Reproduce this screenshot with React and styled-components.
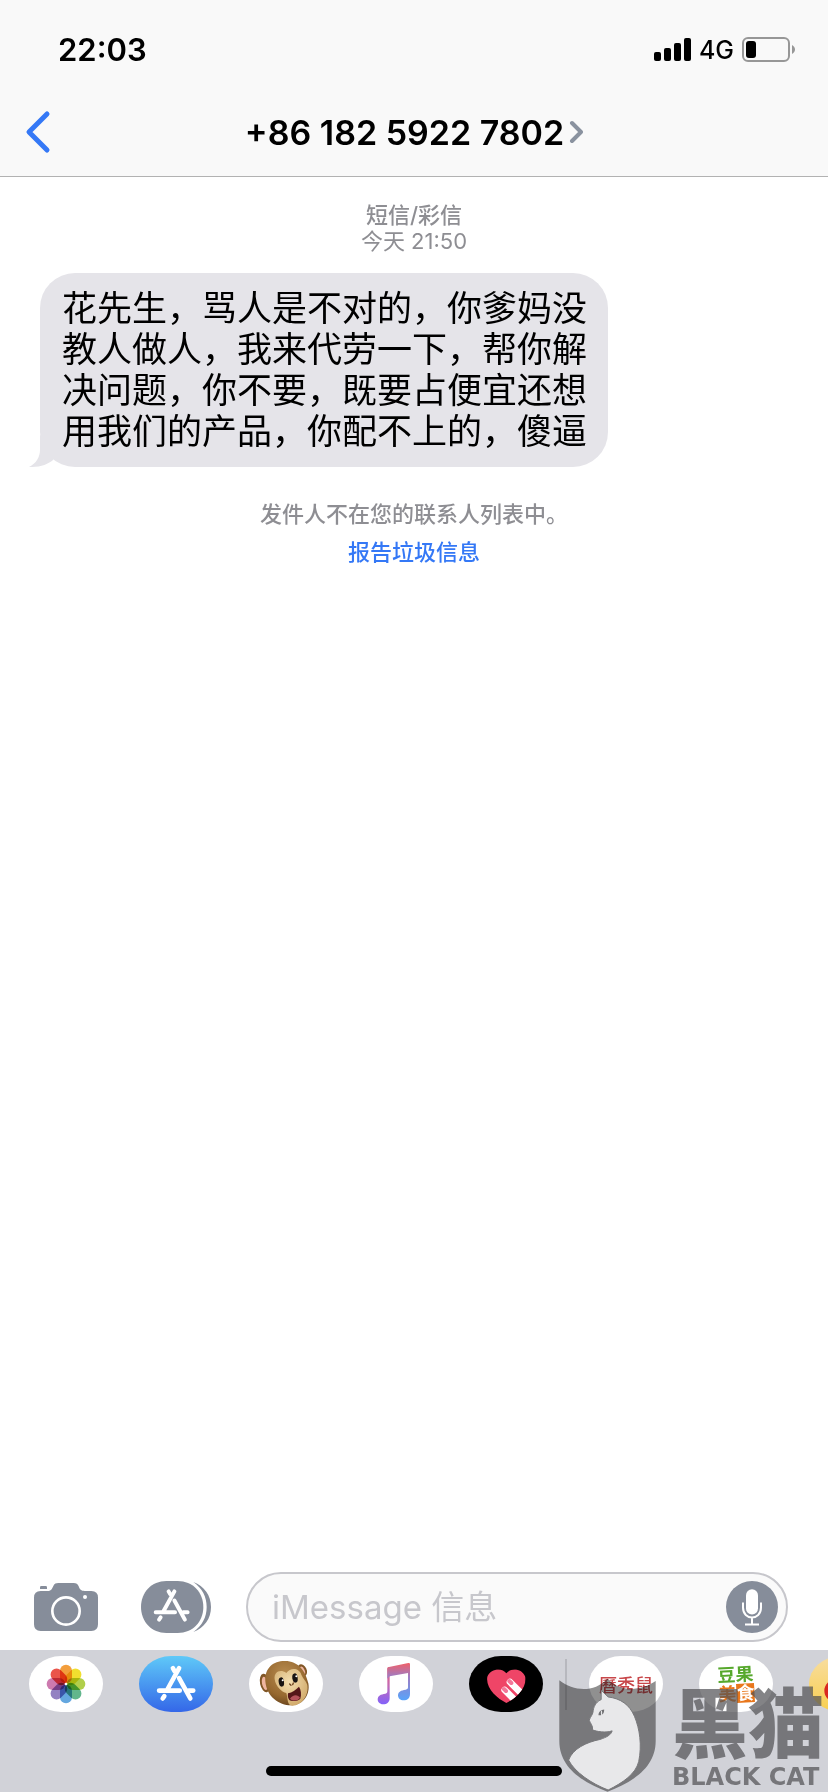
import React from 'react';
import styled, { createGlobalStyle } from 'styled-components';

const sans = `Inter, "Noto Sans CJK SC", sans-serif`;

const GlobalStyle = createGlobalStyle`
  * { box-sizing: border-box; }
  body { margin: 0; background: #fff; font-family: ${sans}; color: #000; }
  button, input { font: inherit; }
  svg { display: block; }
`;

const Screen = styled.div`
  display: flex;
  flex-direction: column;
  min-height: 100vh;
  overflow: hidden;
`;

const Header = styled.header`
  background: #f9f9f9;
  border-bottom: 1px solid #b2b2b2;
`;

const StatusBar = styled.div`
  display: flex;
  align-items: center;
  justify-content: space-between;
  height: 88px;
  padding: 11px 33px 0 58px;
`;

const Clock = styled.time`
  font-size: 31px;
  font-weight: 600;
`;

const StatusIcons = styled.div`
  display: flex;
  align-items: center;
  gap: 8px;
  font-size: 25px;
  font-weight: 500;
`;

const NavBar = styled.div`
  display: grid;
  grid-template-columns: 80px 1fr 80px;
  align-items: center;
  height: 88px;
`;

const PlainButton = styled.button`
  display: flex;
  align-items: center;
  border: 0;
  padding: 0;
  background: none;
  color: inherit;
  cursor: pointer;
  flex: none;
`;

const BackButton = styled(PlainButton)`
  padding-left: 25px;
`;

const ContactButton = styled(PlainButton)`
  justify-self: center;
  gap: 5px;
  font-size: 34px;
  font-weight: 600;
  white-space: nowrap;
`;

const Conversation = styled.main`
  display: flex;
  flex: 1;
  flex-direction: column;
  padding: 25px 40px;
`;

const Stamp = styled.div`
  color: #8e8e93;
  font-size: 22px;
  line-height: 26px;
  text-align: center;
`;

const StampLabel = styled.div`
  font-weight: 500;
`;

const Bubble = styled.div`
  position: relative;
  align-self: flex-start;
  margin: 19px 0 28px;
  padding: 15px 21px 15px 22px;
  border-radius: 35px;
  background: #e5e4e9;
`;

const BubbleText = styled.p`
  max-width: 15em;
  margin: 0;
  font-size: 35px;
  line-height: 41px;
  font-weight: 400;
`;

const Tail = styled.svg`
  position: absolute;
  left: -11px;
  bottom: 0;
`;

const Notice = styled.p`
  margin: 0;
  color: #8e8e93;
  font-size: 22px;
  font-weight: 500;
  line-height: 38px;
  text-align: center;
`;

const ReportLink = styled.a`
  align-self: center;
  color: #3478f6;
  font-size: 22px;
  font-weight: 500;
  line-height: 38px;
  text-decoration: none;
`;

const Composer = styled.form`
  display: flex;
  align-items: center;
  padding: 0 40px 8px 34px;
`;

const StoreButton = styled(PlainButton)`
  margin: 0 35px 0 43px;
`;

const Field = styled.div`
  display: flex;
  flex: 1;
  align-items: center;
  min-width: 0;
  height: 70px;
  padding: 0 8px 0 24px;
  border: 2px solid #c7c7cc;
  border-radius: 35px;
  background: #fafafa;
`;

const MessageInput = styled.input`
  flex: 1;
  min-width: 0;
  border: 0;
  padding: 0;
  outline: 0;
  background: transparent;
  font-size: 33px;
  line-height: 48px;
  &::placeholder { color: #c7c7cc; opacity: 1; }
`;

const MicButton = styled(PlainButton)`
  justify-content: center;
  width: 52px;
  height: 52px;
  border-radius: 50%;
  background: #868d9a;
`;

const AppDrawer = styled.footer`
  position: relative;
  display: flex;
  flex-direction: column;
  align-items: center;
  justify-content: space-between;
  height: 142px;
  padding: 6px 0 16px;
  overflow: hidden;
  background: #d1d2d8;
`;

const AppList = styled.div`
  display: flex;
  align-self: stretch;
  align-items: center;
  gap: 36px;
  padding-left: 29px;
`;

const AppButton = styled(PlainButton)`
  justify-content: center;
  width: 74px;
  height: 56px;
  overflow: hidden;
  border-radius: 32px / 28px;
  background: ${(p) => p.$fill || '#fff'};
`;

const Divider = styled.span`
  flex: none;
  width: 2px;
  height: 51px;
  margin: 0 -14px;
  background: #b7b8be;
`;

const SealText = styled.span`
  color: #c8474a;
  font-family: "Noto Sans CJK TC", sans-serif;
  font-size: 18px;
  font-weight: 500;
`;

const FoodLogo = styled.span`
  display: grid;
  color: #56a82c;
  font-size: 18px;
  font-weight: 700;
  line-height: 19px;
  transform: rotate(-3deg);
`;

const FoodLine = styled.span`
  color: #e8771c;
`;

const FoodBox = styled.span`
  display: inline-block;
  background: #e8771c;
  color: #fff;
`;

const HomeIndicator = styled.div`
  width: 296px;
  height: 10px;
  border-radius: 5px;
  background: #000;
`;

const Watermark = styled.div`
  position: absolute;
  right: 0;
  bottom: 0;
  display: flex;
  gap: 16px;
  align-items: flex-end;
  width: 269px;
  color: #505053;
  pointer-events: none;
`;

const BrandText = styled.div`
  display: flex;
  flex: none;
  flex-direction: column;
  opacity: 0.7;
  white-space: nowrap;
`;

const BrandName = styled.span`
  font-family: "Noto Sans CJK SC", sans-serif;
  font-size: 76px;
  font-weight: 900;
  line-height: 86px;
`;

const BrandLatin = styled.span`
  font-family: "DejaVu Sans", sans-serif;
  font-size: 24px;
  font-weight: 700;
  line-height: 30px;
`;

const StoreMark = ({ transform, width = 14 }) => (
  <g transform={transform} stroke="#fff" strokeWidth={width} strokeLinecap="round" fill="none">
    <path d="M122 36 85 103M61 104H124M103 36 108 45M122 66 156 128M151 104H165M77 121 72 128" />
  </g>
);

const Signal = () => (
  <svg width="37" height="24" aria-hidden="true">
    <rect x="0" y="14" width="7" height="9" rx="2" />
    <rect x="10" y="10" width="7" height="13" rx="2" />
    <rect x="20" y="5" width="7" height="18" rx="2" />
    <rect x="30" y="0" width="7" height="23" rx="2" />
  </svg>
);

const Battery = () => (
  <svg width="53" height="25" aria-hidden="true">
    <rect x="1" y="1" width="46" height="23" rx="5" fill="none" stroke="#979797" strokeWidth="2" />
    <rect x="4" y="4" width="10" height="17" rx="3" />
    <path d="M50 8v9c4-2 4-7 0-9z" fill="#979797" />
  </svg>
);

const Camera = () => (
  <svg width="64" height="48" viewBox="0 0 192 144" fill="#868d9a" aria-hidden="true">
    <path d="M20 24H40C51 24 54 18 58 9 61 2 66 0 73 0H119C127 0 131 3 134 10 138 20 141 24 152 24H172Q192 24 192 44V124Q192 144 172 144H20Q0 144 0 124V44Q0 24 20 24Z" />
    <path d="M18 18V13Q18 9 22 9H35Q39 9 39 13V18Z" />
    <circle cx="96" cy="84" r="41" fill="none" stroke="#fff" strokeWidth="8" />
    <circle cx="153" cy="42" r="6" fill="#fff" />
  </svg>
);

const StoreStack = () => (
  <svg width="70" height="52" viewBox="0 0 210 156" fill="#868d9a" aria-hidden="true">
    <path d="M76 0H110C155 0 187 34 187 78 187 122 155 156 110 156H76C32 156 0 122 0 78 0 34 32 0 76 0Z" />
    <path d="M157 3C190 16 210 43 210 78 210 113 190 140 157 153 184 134 197 108 197 78 197 48 184 22 157 3Z" />
    <StoreMark transform="translate(-12 -2) scale(.92)" width={13} />
  </svg>
);

const Microphone = () => (
  <svg width="20" height="37" viewBox="0 0 60 110" aria-hidden="true">
    <rect x="12" y="0" width="36" height="76" rx="18" fill="#fff" />
    <path d="M3 40V55C3 95 57 95 57 55V40M30 86V106M9 106H51" fill="none" stroke="#fff" strokeWidth="6" />
  </svg>
);

const petals = ['#f2962b', '#f0dc1d', '#aacb3c', '#55b082', '#579fdc', '#8a76bd', '#c96fa8', '#e8463c'];

const PhotosIcon = () => (
  <svg width="40" height="40" viewBox="-60 -60 120 120" aria-hidden="true">
    {petals.map((color, i) => (
      <rect
        key={color}
        x="-18"
        y="-58"
        width="36"
        height="56"
        rx="18"
        fill={color}
        fillOpacity="0.92"
        transform={`rotate(${i * 45})`}
        style={{ mixBlendMode: 'multiply' }}
      />
    ))}
    <circle r="4" fill="#fff" />
  </svg>
);

const StoreIcon = () => (
  <svg width="75" height="56" viewBox="0 0 225 168" aria-hidden="true">
    <StoreMark />
  </svg>
);

const MonkeyIcon = () => (
  <svg width="74" height="56" viewBox="0 0 222 168" aria-hidden="true">
    <defs>
      <radialGradient id="fur" cx=".45" cy=".3" r=".75">
        <stop offset="0" stopColor="#b88c50" />
        <stop offset=".65" stopColor="#96682f" />
        <stop offset="1" stopColor="#65421c" />
      </radialGradient>
      <radialGradient id="skin" cx=".45" cy=".35" r=".7">
        <stop offset="0" stopColor="#f3deb0" />
        <stop offset="1" stopColor="#cfa766" />
      </radialGradient>
    </defs>
    <ellipse cx="48" cy="81" rx="15" ry="28" fill="#815626" transform="rotate(-12 48 81)" />
    <ellipse cx="48" cy="82" rx="9" ry="20" fill="#efb5a0" transform="rotate(-12 48 82)" />
    <ellipse cx="160" cy="43" rx="13" ry="19" fill="#815626" transform="rotate(-25 160 43)" />
    <ellipse cx="160" cy="44" rx="7" ry="13" fill="#efb5a0" transform="rotate(-25 160 44)" />
    <path d="M49 76C46 34 76 14 108 15 148 15 169 44 178 82 184 116 163 146 130 148 93 150 53 124 49 76Z" fill="url(#fur)" />
    <path d="M77 70C74 47 94 38 112 51 125 33 151 36 157 56 163 70 172 75 175 87 180 117 159 149 130 149 114 149 117 128 112 111 98 109 79 90 77 70Z" fill="url(#skin)" />
    <ellipse cx="97" cy="78" rx="8" ry="14" fill="#171312" transform="rotate(-8 97 78)" />
    <ellipse cx="138" cy="66" rx="8" ry="14" fill="#171312" transform="rotate(-8 138 66)" />
    <circle cx="101" cy="73" r="3" fill="#fff" />
    <circle cx="142" cy="61" r="3" fill="#fff" />
    <path d="M122 84 126 88M133 81 131 86" stroke="#6d431f" strokeWidth="4" strokeLinecap="round" />
    <path d="M117 112C130 110 140 101 150 92 156 101 158 115 154 128 148 136 128 137 121 132 116 126 116 119 117 112Z" fill="#541719" />
    <path d="M123 128C130 115 147 114 153 125 147 135 130 137 123 128Z" fill="#b3525a" />
  </svg>
);

const MusicIcon = () => (
  <svg width="74" height="56" viewBox="0 0 222 168" aria-hidden="true">
    <defs>
      <linearGradient id="noteLeft" x1="0" y1="0" x2="0" y2="1">
        <stop offset="0" stopColor="#ef5e70" />
        <stop offset=".5" stopColor="#c26ab5" />
        <stop offset="1" stopColor="#8362fa" />
      </linearGradient>
      <linearGradient id="noteRight" x1="0" y1="0" x2="0" y2="1">
        <stop offset="0" stopColor="#f16068" />
        <stop offset=".35" stopColor="#a17ac0" />
        <stop offset="1" stopColor="#57a4fb" />
      </linearGradient>
    </defs>
    <path d="M85 38Q85 34 90 33L92 60V126C92 138 84 145 72 145 62 145 56 138 56 130 56 119 65 115 79 113 84 112 85 110 85 105Z" fill="url(#noteLeft)" />
    <path d="M85 38Q85 34 90 33L148 21Q153 20 153 25V114C153 127 145 133 134 133 124 133 117 127 117 118 117 107 126 103 140 101 145 100 147 98 147 94V51L92 61 85 68Z" fill="url(#noteRight)" />
  </svg>
);

const TouchIcon = () => (
  <svg width="74" height="56" viewBox="0 0 222 168" aria-hidden="true">
    <defs>
      <clipPath id="heart">
        <path d="M112 52C99 33 65 38 55 62 49 97 84 127 112 141 140 127 174 96 169 63 160 37 125 34 112 52Z" />
      </clipPath>
    </defs>
    <g clipPath="url(#heart)">
      <path d="M40 20H190V160H40Z" fill="#ef4567" />
      <path d="M123 78 175 130M107 102 159 154" stroke="#fff" strokeWidth="20" strokeLinecap="round" />
      <path d="M121 75 127 81M105 99 111 105" stroke="#f3789a" strokeWidth="12" strokeLinecap="round" />
    </g>
  </svg>
);

const EnvelopeIcon = () => (
  <svg width="74" height="56" viewBox="0 0 222 168" aria-hidden="true">
    <circle cx="80" cy="104" r="34" fill="#d92821" />
  </svg>
);

const CatShield = () => (
  <svg width="97" height="113" viewBox="58 384 290 340" aria-hidden="true">
    <path d="M58 388C102 422 164 426 203 382 240 426 303 420 348 390V570C348 650 280 694 203 723 126 694 58 650 58 570Z" fill="#141414" fillOpacity=".47" />
    <path d="M184 418 205 438C243 443 269 461 284 496 300 534 307 583 297 632 288 670 249 696 205 718 155 699 104 664 86 628 98 594 140 574 180 566 201 559 214 552 217 540 198 547 169 542 158 537 160 525 151 517 148 508 152 496 160 491 160 478 163 461 173 451 184 446Z" fill="#e8e8ea" stroke="#77777a" strokeWidth="3" />
    <path d="M176 493C175 483 184 477 193 476 193 488 187 495 176 493Z" fill="#707073" />
    <ellipse cx="185" cy="486" rx="2" ry="7" fill="#e8e8ea" />
  </svg>
);

export default function App() {
  return (
    <Screen>
      <GlobalStyle />
      <Header>
        <StatusBar>
          <Clock>22:03</Clock>
          <StatusIcons>
            <Signal />
            <span>4G</span>
            <Battery />
          </StatusIcons>
        </StatusBar>
        <NavBar>
          <BackButton type="button" aria-label="返回">
            <svg width="26" height="44" fill="none" stroke="#3478f6" strokeWidth="5" strokeLinecap="round" strokeLinejoin="round">
              <path d="M22 4 4 22 22 40" />
            </svg>
          </BackButton>
          <ContactButton type="button">
            +86 182 5922 7802
            <svg width="14" height="24" fill="none" stroke="#8a929f" strokeWidth="4" strokeLinecap="round" strokeLinejoin="round">
              <path d="M3 3 12 12 3 21" />
            </svg>
          </ContactButton>
        </NavBar>
      </Header>

      <Conversation>
        <Stamp>
          <StampLabel>短信/彩信</StampLabel>
          今天 21:50
        </Stamp>
        <Bubble>
          <Tail width="30" height="32" viewBox="0 0 90 96" aria-hidden="true">
            <path d="M33 0V45C33 65 22 86 0 96 31 97 58 88 73 74L90 40Z" fill="#e5e4e9" />
          </Tail>
          <BubbleText>
            花先生，骂人是不对的，你爹妈没教人做人，我来代劳一下，帮你解决问题，你不要，既要占便宜还想用我们的产品，你配不上的，傻逼
          </BubbleText>
        </Bubble>
        <Notice>发件人不在您的联系人列表中。</Notice>
        <ReportLink href="#report">报告垃圾信息</ReportLink>
      </Conversation>

      <Composer>
        <PlainButton type="button" aria-label="相机"><Camera /></PlainButton>
        <StoreButton type="button" aria-label="App Store"><StoreStack /></StoreButton>
        <Field>
          <MessageInput aria-label="信息" placeholder="iMessage 信息" />
          <MicButton type="button" aria-label="录音"><Microphone /></MicButton>
        </Field>
      </Composer>

      <AppDrawer>
        <AppList>
          <AppButton type="button" aria-label="照片"><PhotosIcon /></AppButton>
          <AppButton type="button" aria-label="App Store" $fill="linear-gradient(#5fc9f8, #3467e8)"><StoreIcon /></AppButton>
          <AppButton type="button" aria-label="拟我表情"><MonkeyIcon /></AppButton>
          <AppButton type="button" aria-label="音乐"><MusicIcon /></AppButton>
          <AppButton type="button" aria-label="Digital Touch" $fill="#000"><TouchIcon /></AppButton>
          <Divider />
          <AppButton type="button"><SealText>曆秀鼠</SealText></AppButton>
          <AppButton type="button">
            <FoodLogo>
              <span>豆果</span>
              <FoodLine>美<FoodBox>食</FoodBox></FoodLine>
            </FoodLogo>
          </AppButton>
          <AppButton type="button" aria-label="红包" $fill="linear-gradient(#f8dda0, #f8cf4e)"><EnvelopeIcon /></AppButton>
        </AppList>
        <HomeIndicator />
        <Watermark>
          <CatShield />
          <BrandText>
            <BrandName>黑猫</BrandName>
            <BrandLatin>BLACK CAT</BrandLatin>
          </BrandText>
        </Watermark>
      </AppDrawer>
    </Screen>
  );
}
